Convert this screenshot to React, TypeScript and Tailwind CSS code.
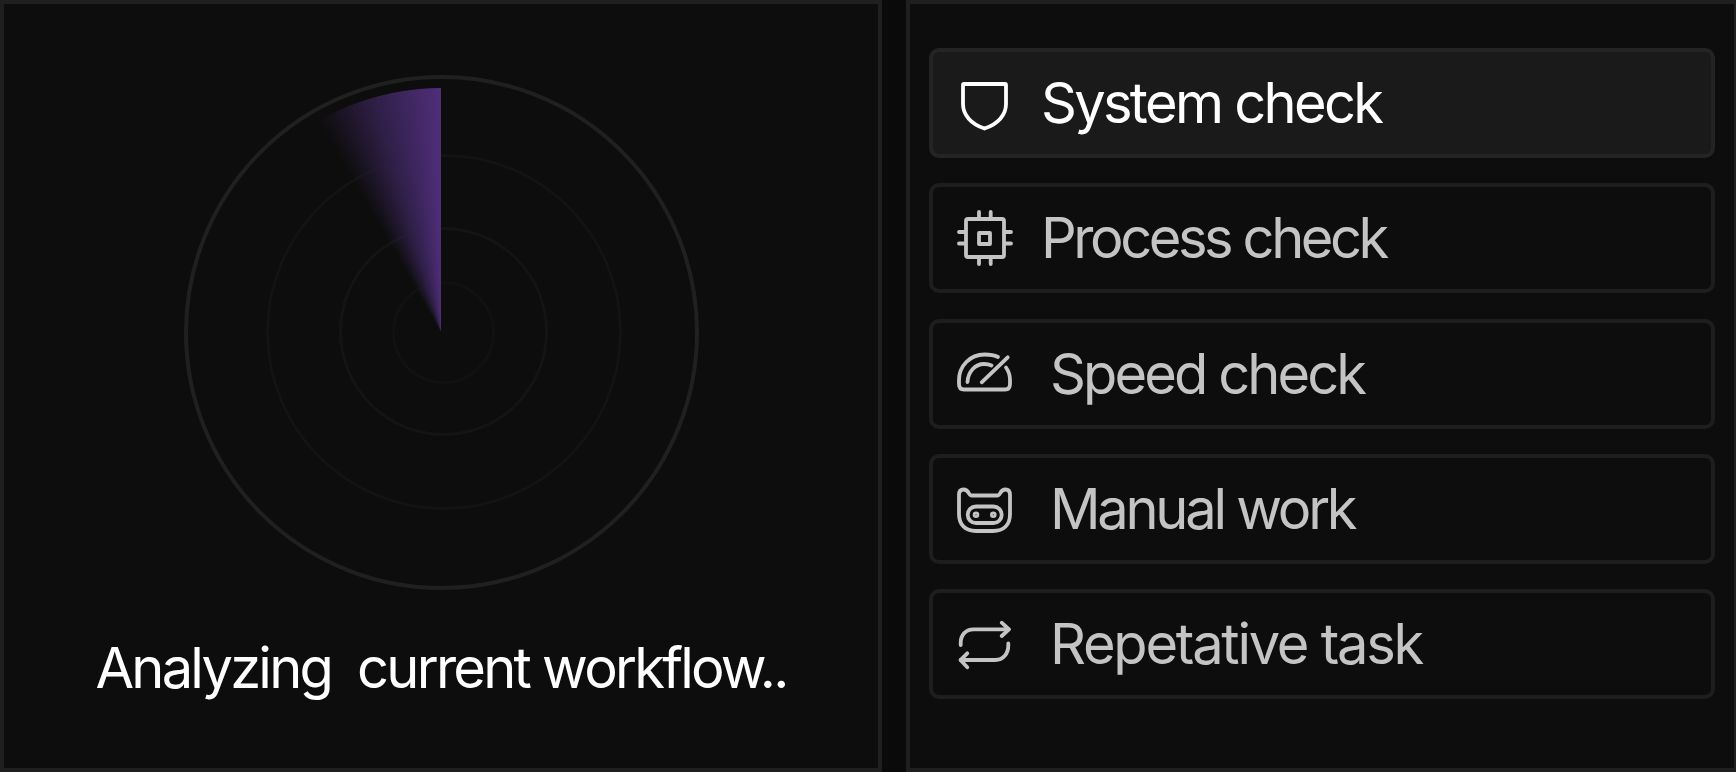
const Shield = () => (
    <svg viewBox="0 0 64 64" className="w-16 h-16 shrink-0" fill="none" stroke="currentColor" strokeWidth="3.8" strokeLinejoin="round" strokeLinecap="round">
        <path d="M10 14a1 1 0 0 1 1-1h41a1 1 0 0 1 1 1v19c0 11-8 20-21.500 24.500C18 53 10 44 10 33z" />
    </svg>
);

const Chip = () => (
    <svg viewBox="0 0 64 64" className="w-16 h-16 shrink-0" fill="none" stroke="currentColor" strokeWidth="3.8" strokeLinejoin="round" strokeLinecap="round">
        <rect x="13" y="13" width="38" height="38" rx="2" />
        <rect x="26" y="27" width="11" height="11" />
        <path d="M26 6v6M37.700 6v6M26 52v6M37.700 52v6M6 26h6M6 37.500h6M52 26h6M52 37.500h6" />
    </svg>
);

const Gauge = () => (
    <svg viewBox="0 0 64 64" className="w-16 h-16 shrink-0" fill="none" stroke="currentColor" strokeWidth="3.8" strokeLinejoin="round" strokeLinecap="round">
        <path d="M45 15C41 13 36 12.500 31.500 12.500 17 12.500 6 24 6 38v4c0 3.500 2 5.500 5 5.500h41c3 0 5-2 5-5.500v-4c0-5-1.500-9-4-12.500" />
        <path d="M14.500 40C15 30 22 22 31 22c3 0 5.500.500 7.500 1.500" />
        <path d="M28.700 40.300 54.700 15.300" />
    </svg>
);

const Bot = () => (
    <svg viewBox="0 0 64 64" className="w-16 h-16 shrink-0" fill="none" stroke="currentColor" strokeWidth="3.8" strokeLinejoin="round" strokeLinecap="round">
        <path d="M6 18c0-4 2-5.500 4.500-5.500 3 0 4.500 2 5.500 4 .700 1.500 1.500 2 3 2h25c1.500 0 2.300-.500 3-2 1-2 2.500-4 5.500-4 2.500 0 4.500 1.500 4.500 5.500v19c0 10.500-6 17-17 17H23C12 54 6 47.500 6 37z" />
        <rect x="14.700" y="29.500" width="34" height="16.500" rx="8.250" />
        <circle cx="23" cy="37.700" r="1.400" />
        <circle cx="40.300" cy="37.700" r="1.400" />
    </svg>
);

const Repeat = () => (
    <svg viewBox="0 0 64 64" className="w-16 h-16 shrink-0" fill="none" stroke="currentColor" strokeWidth="3.8" strokeLinejoin="round" strokeLinecap="round">
        <path d="M7.700 33v-2c0-8 5-13.700 13-13.700h35" />
        <path d="M48.700 10.700 56 17.300 48.700 24" />
        <path d="M55.300 31.500v2c0 8-5 14.500-13 14.500h-34.500" />
        <path d="M14.300 41.300 7.500 48 14.300 55.300" />
    </svg>
);

const rows = [
    { label: "System check", icon: <Shield />, active: true, offset: "ml-[24px]", tracking: "tracking-[-2.7px]" },
    { label: "Process check", icon: <Chip />, active: false, offset: "ml-[24px]", tracking: "tracking-[-3.43px]" },
    { label: "Speed check", icon: <Gauge />, active: false, offset: "ml-[33px]", tracking: "tracking-[-2.9px]" },
    { label: "Manual work", icon: <Bot />, active: false, offset: "ml-[33px]", tracking: "tracking-[-3.25px]" },
    { label: "Repetative task", icon: <Repeat />, active: false, offset: "ml-[33px]", tracking: "tracking-[-2.25px]" },
];

const Radar = () => {
    return (
        <div className="relative w-[515px] h-[515px] shrink-0">
            <div className="absolute inset-0 rounded-full border-4 border-[#202020]"></div>
            <div className="absolute left-[82px] top-[79px] w-[356px] h-[356px] rounded-full border-[3px] border-[#131313]"></div>
            <div className="absolute left-[155px] top-[152px] w-[209px] h-[209px] rounded-full border-[3px] border-[#141414]"></div>
            <div className="absolute left-[208px] top-[206px] w-[103px] h-[103px] rounded-full border-[3px] border-[#111111]"></div>
            <div className="absolute left-[13.5px] top-[13px] w-[488px] h-[488px] rounded-full bg-[conic-gradient(from_330deg,transparent_0deg,#2f1f47_14deg,#4f2e7a_30deg,transparent_30deg)]"></div>
        </div>
    );
};

const App = () => {
    return (
        <div className="flex w-[1736px] h-[772px] overflow-hidden bg-[#0a0a0a] font-['Inter',sans-serif]">
            <div className="flex flex-col items-center w-[882px] h-full shrink-0 pt-[71px] border-4 border-[#1f1f1f] bg-[#0d0d0d]">
                <Radar />
                <p className="mt-[44px] text-[56px] font-[430] leading-[68px] tracking-[-2.75px] text-white whitespace-pre">Analyzing  current workflow..</p>
            </div>
            <div className="flex flex-col gap-[25.25px] w-[832px] h-full shrink-0 ml-[24px] pt-[44px] px-[19px] border-4 border-[#1f1f1f] bg-[#0d0d0d]">
                {rows.map((row) => (
                    <div key={row.label} className={`flex items-center h-[110px] shrink-0 pl-[20px] rounded-[10px] border-4 ${row.active ? "bg-[#1a1a1a] border-[#242424] text-white" : "border-[#1e1e1e] text-[#c4c4c4]"}`}>
                        {row.icon}
                        <span className={`text-[56px] font-[430] leading-none ${row.offset} ${row.tracking}`}>{row.label}</span>
                    </div>
                ))}
            </div>
        </div>
    );
};

export default App;
